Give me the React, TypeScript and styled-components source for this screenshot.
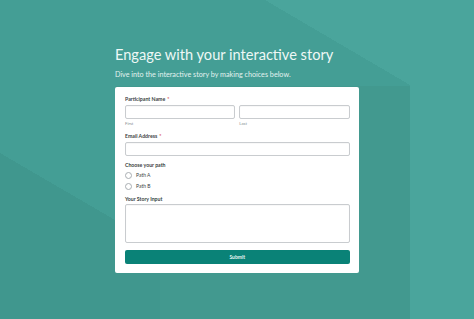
import React from "react";
import styled, { createGlobalStyle } from "styled-components";

const Global = createGlobalStyle`
  html, body { margin: 0; padding: 0; }
  body { font-family: Lato, "Open Sans", sans-serif; }
  * { box-sizing: border-box; }
`;

const Page = styled.div`
  min-height: 319px;
  width: 474px;
  overflow: hidden;
  display: flex;
  justify-content: center;
  background-color: #449e95;
  background-image:
    linear-gradient(to top right, transparent 50%, #4aa59c 50%),
    linear-gradient(#4aa59c, #4aa59c),
    linear-gradient(to top right, #40978e 50%, transparent 50%),
    linear-gradient(#40978e, #40978e),
    linear-gradient(#42998f, #42998f);
  background-repeat: no-repeat;
  background-size: 145px 85px, 64px 319px, 115px 67px, 160px 99px, 295px 233px;
  background-position: 265px 0, 410px 0, 0 153px, 0 220px, 115px 86px;
`;

const Container = styled.div`
  width: 244px;
  padding-top: 46px;
  display: flex;
  flex-direction: column;
`;

const Title = styled.h1`
  margin: 0;
  font-size: 14.6px;
  line-height: 18px;
  font-weight: 400;
  color: #eef8f6;
  white-space: nowrap;
`;

const Subtitle = styled.p`
  margin: 6px 0 0;
  font-size: 7.2px;
  line-height: 9px;
  color: #e3f2ef;
  white-space: nowrap;
`;

const Card = styled.form`
  margin-top: 8px;
  background: #ffffff;
  border-radius: 2px;
  padding: 8.5px 9.5px 9px 10px;
  display: flex;
  flex-direction: column;
`;

const Label = styled.label<{ $gap?: number }>`
  display: block;
  margin-top: ${(p) => p.$gap ?? 0}px;
  font-size: 5.2px;
  line-height: 7px;
  font-weight: 700;
  color: #3a3f44;
  white-space: nowrap;
`;

const Req = styled.span`
  color: #d9534f;
  margin-left: 2px;
`;

const Row = styled.div`
  display: grid;
  grid-template-columns: 1fr 1fr;
  column-gap: 4px;
  margin-top: 2.5px;
`;

const Col = styled.div`
  display: flex;
  flex-direction: column;
`;

const Input = styled.input<{ $gap?: number }>`
  display: block;
  width: 100%;
  height: 14px;
  margin: ${(p) => p.$gap ?? 0}px 0 0;
  padding: 0 3px;
  border: 1px solid #c9cccf;
  border-radius: 2px;
  box-shadow: inset 0 0.5px 1px rgba(0, 0, 0, 0.06);
  background: #fff;
  outline: none;
`;

const Sub = styled.span`
  font-size: 4.3px;
  line-height: 6px;
  margin-top: 2px;
  color: #8a9095;
`;

const RadioRow = styled.label<{ $gap: number }>`
  display: flex;
  align-items: center;
  gap: 4px;
  height: 8px;
  margin-top: ${(p) => p.$gap}px;
  font-size: 5px;
  color: #3a3f44;
`;

const Circle = styled.span`
  width: 7px;
  height: 7px;
  border-radius: 50%;
  border: 0.8px solid #a9aeb2;
  background: #fff;
  flex: none;
`;

const Area = styled.textarea`
  display: block;
  width: 100%;
  height: 39px;
  margin-top: 1.5px;
  border: 1px solid #c9cccf;
  border-radius: 2px;
  box-shadow: inset 0 0.5px 1px rgba(0, 0, 0, 0.06);
  resize: none;
  outline: none;
`;

const Submit = styled.button`
  margin-top: 7px;
  height: 14px;
  width: 100%;
  border: none;
  border-radius: 2px;
  background: #0a8277;
  color: #e8f5f3;
  font-family: Lato, sans-serif;
  font-size: 5px;
  font-weight: 700;
  padding: 0;
`;

export default function App() {
  return (
    <>
      <Global />
      <Page>
        <Container>
          <Title>Engage with your interactive story</Title>
          <Subtitle>Dive into the interactive story by making choices below.</Subtitle>
          <Card onSubmit={(e) => e.preventDefault()}>
            <Label>
              Participant Name<Req>*</Req>
            </Label>
            <Row>
              <Col>
                <Input />
                <Sub>First</Sub>
              </Col>
              <Col>
                <Input />
                <Sub>Last</Sub>
              </Col>
            </Row>
            <Label $gap={5.5}>
              Email Address<Req>*</Req>
            </Label>
            <Input $gap={2.5} />
            <Label $gap={5.5}>Choose your path</Label>
            <RadioRow $gap={2.5}>
              <Circle />
              Path A
            </RadioRow>
            <RadioRow $gap={3}>
              <Circle />
              Path B
            </RadioRow>
            <Label $gap={5.5}>Your Story Input</Label>
            <Area />
            <Submit type="submit">Submit</Submit>
          </Card>
        </Container>
      </Page>
    </>
  );
}
